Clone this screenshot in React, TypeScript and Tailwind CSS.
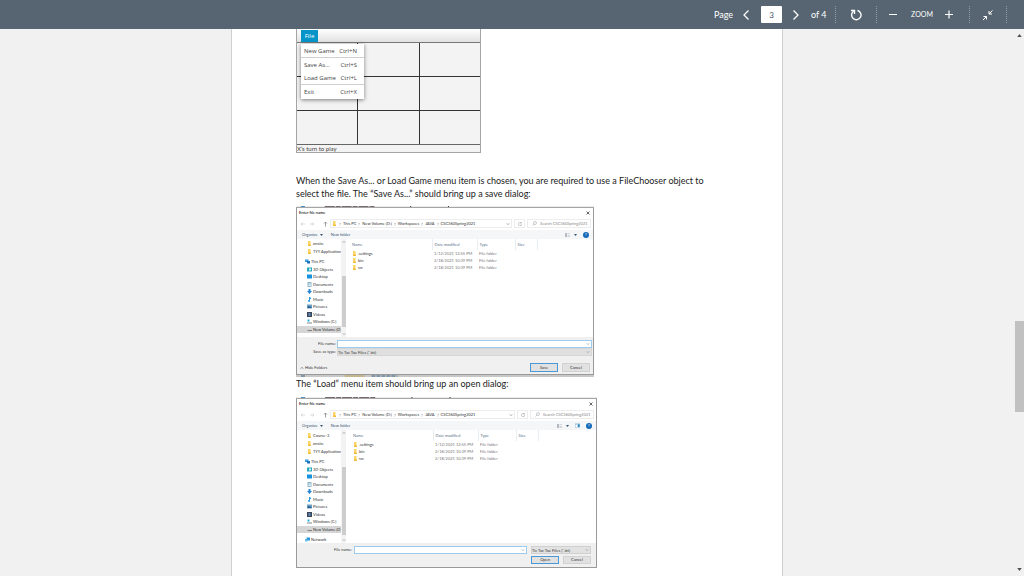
import type { ReactNode } from "react";
import clsx from "clsx";

const folders = [
    { name: ".settings", date: "1/12/2021 12:55 PM" },
    { name: "bin", date: "2/18/2021 10:39 PM" },
    { name: "src", date: "2/18/2021 10:39 PM" },
];

const crumbs = ["This PC", "New Volume (D:)", "Workspaces", "JAVA", "CSC360Spring2021"];

const drives = [
    { name: "3D Objects", icon: "cube" },
    { name: "Desktop", icon: "desktop" },
    { name: "Documents", icon: "doc" },
    { name: "Downloads", icon: "down" },
    { name: "Music", icon: "music" },
    { name: "Pictures", icon: "picture" },
    { name: "Videos", icon: "video" },
    { name: "Windows (C:)", icon: "windows" },
    { name: "New Volume (D:", icon: "drive" },
];

const glyphs: Record<string, ReactNode> = {
    folder: (
        <>
            <path d="M2 0h5v10H2z" fill="#fbd568" />
            <path d="M2 7h6v3H2z" fill="#f2bd3e" />
        </>
    ),
    pc: (
        <>
            <path d="M0 1h7v5H0z" fill="#3d9be0" />
            <path d="M4 4h6v5H4z" fill="#1d74bd" />
        </>
    ),
    cube: (
        <>
            <path d="M0 1h10v8H0z" fill="#22a7bd" />
            <path d="M4 3h4v4H4z" fill="#d8f5f8" />
        </>
    ),
    desktop: <path d="M0 1h10v8H0z" fill="#1491e0" />,
    doc: (
        <>
            <path d="M1 0h8v10H1z" fill="#8fb4cc" />
            <path d="M3 2h5v1H3zM3 4h5v1H3zM3 6h5v2H3z" fill="#eef6fb" />
        </>
    ),
    down: <path d="M3 0h4v4h3L5 10 0 4h3z" fill="#2583d4" />,
    music: <path d="M4 0h2l3 4H6v4a2 2 0 1 1-2-2z" fill="#2a9ce8" />,
    picture: (
        <>
            <path d="M0 1h10v8H0z" fill="#6fa3c9" />
            <path d="M1 6l3-3 3 3 2-1v3H1z" fill="#2b5f91" />
        </>
    ),
    video: (
        <>
            <path d="M0 0h10v10H0z" fill="#3b4656" />
            <path d="M3 2h4v6H3z" fill="#5c86b8" />
        </>
    ),
    windows: (
        <>
            <path d="M1 1h4v4H1z" fill="#23aee5" />
            <path d="M0 7h10v2H0z" fill="#80898f" />
        </>
    ),
    drive: <path d="M1 6h9v2H1z" fill="#7c8287" />,
    network: (
        <>
            <path d="M3 1h7v6H3z" fill="#2496d8" />
            <path d="M0 4h5v5H0z" fill="#62bce8" />
        </>
    ),
};

const Glyph = ({ name }: { name: string }) => (
    <svg viewBox="0 0 10 10" className="h-[5px] w-[5px] shrink-0">
        {glyphs[name]}
    </svg>
);

const Chevron = ({ className }: { className?: string }) => (
    <svg viewBox="0 0 10 10" className={clsx("h-[4px] w-[4px] shrink-0", className)} fill="none" stroke="currentColor" strokeWidth="1.5">
        <path d="M2 3.500l3 3 3-3" />
    </svg>
);

const Divider = () => <div className="h-[17px] border-l border-dotted border-[#93a0aa]" />;

const Toolbar = () => (
    <header className="flex h-[29px] shrink-0 items-center justify-end bg-[#566571] pr-[17px] text-[9px] text-white">
        <label htmlFor="page" className="w-5">Page</label>
        <button aria-label="Previous page" className="mr-[3px] flex w-6 justify-center">
            <svg viewBox="0 0 12 12" className="h-3 w-3" fill="none" stroke="currentColor" strokeWidth="1.3">
                <path d="M8.500 1.500L4 6l4.500 4.500" />
            </svg>
        </button>
        <input id="page" defaultValue="3" className="h-[17px] w-[21px] rounded-[1px] bg-white text-center text-[8px] text-[#46525c]" />
        <button aria-label="Next page" className="flex w-7 justify-center">
            <svg viewBox="0 0 12 12" className="h-3 w-3" fill="none" stroke="currentColor" strokeWidth="1.3">
                <path d="M3.500 1.500L8 6l-4.500 4.500" />
            </svg>
        </button>
        <span className="w-[25px] whitespace-nowrap pl-px">of 4</span>
        <Divider />
        <button aria-label="Rotate" className="flex w-10 justify-center">
            <svg viewBox="0 0 12 12" className="h-3 w-3" fill="none" stroke="currentColor" strokeWidth="1.4">
                <path d="M3.600 2.200A4.700 4.700 0 1 0 7.500 1.500" />
                <path d="M1 1.500h3.500V5" />
            </svg>
        </button>
        <Divider />
        <button aria-label="Zoom out" className="flex w-8 justify-center">
            <svg viewBox="0 0 10 10" className="h-[10px] w-[10px]" fill="none" stroke="currentColor">
                <path d="M1 4.500h8" />
            </svg>
        </button>
        <span className="w-[26px] text-center text-[7px]">ZOOM</span>
        <button aria-label="Zoom in" className="mr-[6px] flex w-7 justify-center">
            <svg viewBox="0 0 10 10" className="h-[10px] w-[10px]" fill="none" stroke="currentColor" strokeWidth="1.2">
                <path d="M1 4.500h8M5 0.500v8" />
            </svg>
        </button>
        <Divider />
        <button aria-label="Exit full screen" className="flex w-9 justify-center">
            <svg viewBox="0 0 12 12" className="h-3 w-3" fill="none" stroke="currentColor">
                <path d="M10.500 1.500L7 5M7 2v3h3M1 11l3.500-3.500M1.500 7.500h3v3" />
            </svg>
        </button>
        <Divider />
    </header>
);

const MenuItem = ({ label, keys, ruled }: { label: string; keys: string; ruled?: boolean }) => (
    <li className={clsx(ruled && "border-t border-[#d0d0d0]")}>
        <button className="flex h-[13px] w-full items-center justify-between pl-[3px] pr-[7px]">
            <span>{label}</span>
            <span>{keys}</span>
        </button>
    </li>
);

const GameWindow = () => (
    <div className="relative w-[185px] border border-t-0 border-[#a5a5a5] bg-[#f3f3f3] font-['Open_Sans',sans-serif] text-[6px] leading-[8px] text-[#444]">
        <div className="flex h-[14px] items-end border-b border-[#777] bg-linear-to-b from-white to-[#e2e2e2] pl-1">
            <button className="h-[12px] w-[17px] bg-[#0795c9] text-white">File</button>
        </div>
        <div className="grid grid-cols-3 gap-px border-b border-[#666] bg-[#333]">
            {Array.from({ length: 9 }, (_, i) => (
                <div key={i} className="h-[33px] bg-[#f3f3f3]" />
            ))}
        </div>
        <p className="font-['Lato',sans-serif] leading-[7px]">X’s turn to play</p>
        <ul className="absolute left-1 top-[15px] w-[63px] bg-white pb-px shadow-[0_1px_4px_rgba(0,0,0,0.5)]">
            <MenuItem label="New Game" keys="Ctrl+N" />
            <MenuItem label="Save As..." keys="Ctrl+S" ruled />
            <MenuItem label="Load Game" keys="Ctrl+L" />
            <MenuItem label="Exit" keys="Ctrl+X" ruled />
        </ul>
    </div>
);

const SidebarItem = ({ name, icon, root, selected }: { name: string; icon: string; root?: boolean; selected?: boolean }) => (
    <li className={clsx("flex items-center gap-px whitespace-nowrap", root ? "pl-[8px]" : "pl-[10px]", selected && "bg-[#d6d6d6]")}>
        <Glyph name={icon} />
        {name}
    </li>
);

// thin slice of the editor window showing behind the dialog
const BackdropStrip = ({ kind }: { kind: "code" | "tabs" }) => (
    <svg viewBox="0 0 300 2" preserveAspectRatio="none" className="block h-[2px] w-full">
        {kind === "code" ? (
            <>
                <path d="M0 .5h300" stroke="#ececec" />
                <path d="M0 1.500h300" stroke="#a5a5a5" />
                <path d="M5 .5h4" stroke="#4a91c5" />
                <path d="M29 .5h50" stroke="#77686c" strokeDasharray="10 1 5 1" />
                <path d="M115 .5h1M153 .5h1" stroke="#333" />
            </>
        ) : (
            <>
                <path d="M0 1h300" stroke="#c8c8c8" strokeWidth="2" />
                <path d="M5 1h4M76 1h26" stroke="#8297a8" strokeWidth="2" strokeDasharray="4 1" />
                <path d="M49 1h20" stroke="#c3b58e" strokeWidth="2" />
            </>
        )}
    </svg>
);

const FileDialog = ({ mode }: { mode: "save" | "open" }) => {
    const open = mode === "open";
    const pinned = open ? ["Course-3", "onsite", "TYY Application"] : ["onsite", "TYY Application"];

    return (
        <section className={clsx("font-['Lato',sans-serif] text-[4px] leading-[7px] text-[#333]", open ? "w-[301px]" : "w-[298px]")}>
            <BackdropStrip kind="code" />
            <div className="border border-t-0 border-[#999] bg-white">
                <div className="flex h-[9px] items-center justify-between pl-[2px] pr-[3px]">
                    <h2 className="font-medium text-black">Enter file name</h2>
                    <button aria-label="Close">
                        <svg viewBox="0 0 8 8" className="h-[4px] w-[4px]" stroke="#333" strokeWidth="1.5">
                            <path d="M1 1l6 6M7 1L1 7" />
                        </svg>
                    </button>
                </div>

                <div className="flex h-[13px] items-center gap-[2px] pl-[3px] pr-[2px]">
                    <svg viewBox="0 0 28 6" className="h-[6px] w-[28px] shrink-0" fill="none" strokeWidth="0.700">
                        <path d="M5 3H1l1.500-1.500M1 3l1.500 1.500M10 3h4l-1.500-1.500M14 3l-1.500 1.500" stroke="#ccc" />
                        <path d="M25.500 5.500V1L24 2.500M25.500 1L27 2.500" stroke="#777" />
                    </svg>
                    <nav className="flex h-[9px] min-w-0 flex-1 items-center gap-px border border-[#ededed] pl-px">
                        <Glyph name="folder" />
                        {crumbs.map((crumb) => (
                            <span key={crumb} className="flex items-center gap-px whitespace-nowrap">
                                <Chevron className="-rotate-90 text-[#888]" />
                                {crumb}
                            </span>
                        ))}
                        <Chevron className="ml-auto mr-px text-[#666]" />
                    </nav>
                    <button aria-label="Refresh" className="flex h-[9px] w-[11px] items-center justify-center border border-[#ededed]">
                        <svg viewBox="0 0 10 10" className="h-[4px] w-[4px]" fill="none" stroke="#777">
                            <path d="M8 2.500A4 4 0 1 0 9 5M8.500 0v3H6" />
                        </svg>
                    </button>
                    <label className="flex h-[9px] w-[64px] items-center gap-[3px] border border-[#ededed] pl-[4px]">
                        <svg viewBox="0 0 10 10" className="h-[5px] w-[5px] shrink-0" fill="none" stroke="#999">
                            <circle cx="6" cy="4" r="3" />
                            <path d="M4 6L1 9" />
                        </svg>
                        <input aria-label="Search" placeholder="Search CSC360Spring2021" className="w-full min-w-0 placeholder:text-[#888]" />
                    </label>
                </div>

                <div className="flex h-[9px] items-center bg-[#f4f6f8] pl-[5px] pr-[4px] text-[#3c5470]">
                    <button className="flex items-center gap-[2px]">
                        Organize
                        <svg viewBox="0 0 6 4" className="h-[2px] w-[3px]">
                            <path d="M0 0h6L3 4z" fill="#3c5470" />
                        </svg>
                    </button>
                    <button className="ml-[8px]">New folder</button>
                    <div className="ml-auto flex items-center gap-[4px]">
                        <svg viewBox="0 0 10 8" className="h-[4px] w-[5px]">
                            <path d="M0 0h4v8H0zM5 1h5v1H5zM5 4h5v1H5zM5 7h5v1H5z" fill="#b4bac0" />
                        </svg>
                        <svg viewBox="0 0 6 4" className="h-[2px] w-[3px]">
                            <path d="M0 0h6L3 4z" fill="#3c5470" />
                        </svg>
                        {open && (
                            <svg viewBox="0 0 10 10" className="ml-[2px] h-[5px] w-[5px]">
                                <path d="M0 1h10v8H0z" fill="#8dbbd8" />
                                <path d="M1 3h4v5H1z" fill="#fff" />
                                <path d="M6 3h3v5H6z" fill="#2588c8" />
                            </svg>
                        )}
                        <button aria-label="Help" className="ml-[2px] flex h-[6px] w-[6px] items-center justify-center rounded-full bg-[#1469b8] text-[4px] text-white">?</button>
                    </div>
                </div>

                <div className={clsx("flex", open ? "h-[113px]" : "h-[98px]")}>
                    <div className={clsx("w-[44px] shrink-0", open ? "pt-[2px]" : "pt-px")}>
                        <ul className={clsx("grid auto-rows-fr", open ? "h-[23px]" : "h-[15px]")}>
                            {pinned.map((name) => (
                                <SidebarItem key={name} name={name} icon="folder" />
                            ))}
                        </ul>
                        <ul className="mt-[3px] grid h-[75px] auto-rows-fr">
                            <SidebarItem name="This PC" icon="pc" root />
                            {drives.map((drive) => (
                                <SidebarItem key={drive.name} {...drive} selected={drive.icon === "drive"} />
                            ))}
                        </ul>
                        {open && (
                            <ul className="mt-[3px]">
                                <SidebarItem name="Network" icon="network" root />
                            </ul>
                        )}
                    </div>
                    <div className="flex w-[5px] shrink-0 flex-col items-center justify-between bg-[#f3f3f3] py-px text-[#777]">
                        <Chevron className="rotate-180" />
                        <div className={clsx("w-[4px] bg-[#cdcdcd]", open ? "mt-[28px] h-[68px]" : "mb-[4px] mt-[30px] h-[51px]")} />
                        <Chevron />
                    </div>
                    <div className={clsx("min-w-0 flex-1", open ? "pl-[5px]" : "pl-[4px]")}>
                        <table className="w-full table-fixed text-left">
                            <colgroup>
                                <col className="w-[82px]" />
                                <col className="w-[45px]" />
                                <col className="w-[38px]" />
                                <col className="w-[22px]" />
                                <col />
                            </colgroup>
                            <thead>
                                <tr className="h-[11px] text-[#60758c] [&>th]:border-r [&>th]:border-[#e8edf2] [&>th]:p-0 [&>th]:pl-[2px] [&>th]:font-normal">
                                    <th>Name</th>
                                    <th>Date modified</th>
                                    <th>Type</th>
                                    <th>Size</th>
                                    <td />
                                </tr>
                            </thead>
                            <tbody>
                                {folders.map(({ name, date }) => (
                                    <tr key={name} className="h-[7px] whitespace-nowrap text-[#777] [&>td]:p-0 [&>td]:pl-[2px]">
                                        <td>
                                            <div className="flex items-center gap-px text-[#333]">
                                                <Glyph name="folder" />
                                                {name}
                                            </div>
                                        </td>
                                        <td>{date}</td>
                                        <td>File folder</td>
                                        <td />
                                        <td />
                                    </tr>
                                ))}
                            </tbody>
                        </table>
                    </div>
                </div>

                {open ? (
                    <div className="flex h-[24px] gap-[4px] bg-[#f0f0f0] pl-[37px] pr-[5px] pt-[3px]">
                        <label htmlFor="open-name" className="w-[20px] whitespace-nowrap">File name:</label>
                        <div className="-ml-[4px] flex h-[8px] flex-1 items-center border border-[#9ccbee] bg-white pr-px">
                            <input id="open-name" className="h-full min-w-0 flex-1" />
                            <Chevron className="text-[#888]" />
                        </div>
                        <div className="w-[60px]">
                            <div className="flex h-[8px] items-center border border-[#d0d0d0] bg-[#e2e2e2] pr-px">
                                <select aria-label="File type" className="h-full min-w-0 flex-1 appearance-none">
                                    <option>Tic Tac Toe Files (*.ttt)</option>
                                </select>
                                <Chevron className="text-[#888]" />
                            </div>
                            <div className="mt-[2px] flex justify-between">
                                <button className="h-[8px] w-[28px] border border-[#4b98d6] bg-[#e1e1e1] leading-[6px]">Open</button>
                                <button className="h-[8px] w-[28px] border border-[#d2d2d2] bg-[#e1e1e1] leading-[6px]">Cancel</button>
                            </div>
                        </div>
                    </div>
                ) : (
                    <div className="h-[37px] bg-[#f0f0f0] pr-px pt-[3px]">
                        <div className="flex h-[8px] gap-px">
                            <label htmlFor="save-name" className="w-[39px] text-right">File name:</label>
                            <div className="flex flex-1 items-center border border-[#9ccbee] bg-white pr-px">
                                <input id="save-name" className="h-full min-w-0 flex-1" />
                                <Chevron className="text-[#888]" />
                            </div>
                        </div>
                        <div className="flex h-[8px] gap-px">
                            <label htmlFor="save-type" className="w-[39px] text-right">Save as type:</label>
                            <div className="flex flex-1 items-center border border-[#d6d6d6] bg-[#dfdfdf] pr-px">
                                <select id="save-type" className="h-full min-w-0 flex-1 appearance-none">
                                    <option>Tic Tac Toe Files (*.ttt)</option>
                                </select>
                                <Chevron className="text-[#888]" />
                            </div>
                        </div>
                        <div className="mt-[7px] flex items-center gap-[4px] pl-[3px] pr-[2px]">
                            <button className="mr-auto flex items-center gap-px">
                                <Chevron className="rotate-180" />
                                Hide Folders
                            </button>
                            <button className="h-[9px] w-[28px] border border-[#4b98d6] bg-[#e1e1e1]">Save</button>
                            <button className="h-[9px] w-[28px] border border-[#d2d2d2] bg-[#e1e1e1]">Cancel</button>
                        </div>
                    </div>
                )}
            </div>
            {!open && <BackdropStrip kind="tabs" />}
        </section>
    );
};

const Scrollbar = () => (
    <div className="flex w-[10px] shrink-0 flex-col items-center bg-[#f1f1f1] py-[5px]">
        <svg viewBox="0 0 6 4" className="h-[3px] w-[5px]">
            <path d="M3 0l3 4H0z" fill="#505050" />
        </svg>
        <div className="grow-[284]" />
        <div className="w-[9px] grow-[91] bg-[#c1c1c1]" />
        <div className="grow-[156]" />
        <svg viewBox="0 0 6 4" className="h-[3px] w-[5px]">
            <path d="M0 0h6L3 4z" fill="#505050" />
        </svg>
    </div>
);

export default function App() {
    return (
        <div className="flex h-screen flex-col overflow-hidden bg-[#f1f1f1] font-['Lato',sans-serif]">
            <Toolbar />
            <div className="flex min-h-0 flex-1">
                <main className="min-w-0 flex-1 overflow-hidden">
                    <article className="mx-auto min-h-full w-full max-w-[552px] border-x border-[#cfd0d4] bg-white px-16 text-[9px] leading-[13px] text-[#222]">
                        <GameWindow />
                        <p className="mb-[6px] mt-[21px]">
                            When the Save As... or Load Game menu item is chosen, you are required to use a FileChooser object to select the file. The “Save As...” should bring up a save dialog:
                        </p>
                        <FileDialog mode="save" />
                        <p className="mb-[7px]">The “Load” menu item should bring up an open dialog:</p>
                        <FileDialog mode="open" />
                    </article>
                </main>
                <Scrollbar />
            </div>
        </div>
    );
}
